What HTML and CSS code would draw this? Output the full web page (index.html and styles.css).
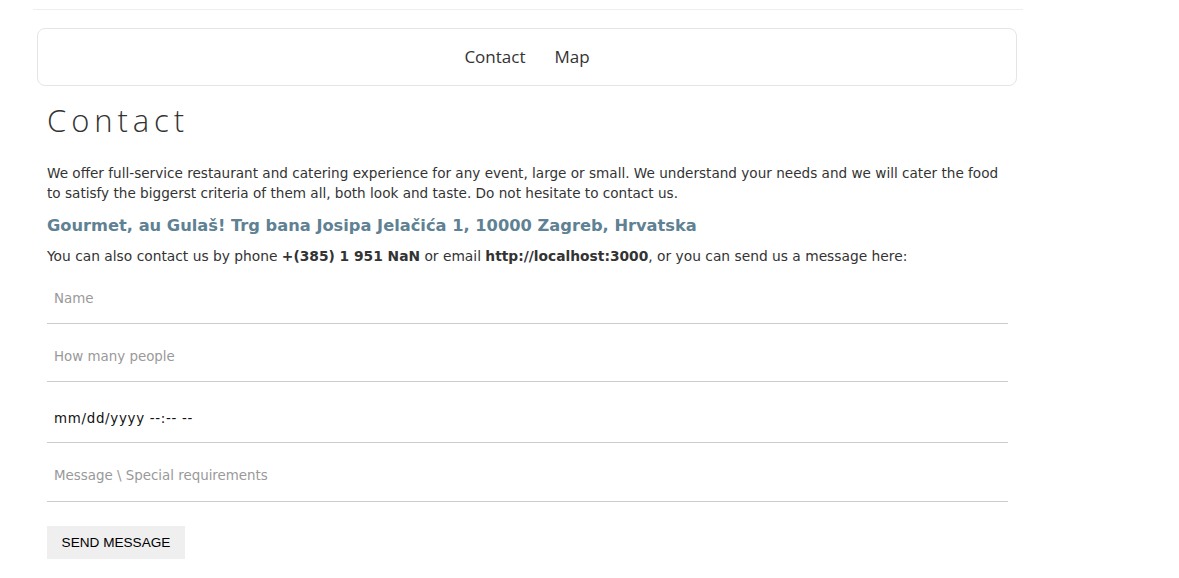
FILE: index.html
```html
<!DOCTYPE html>
<html>
<head>
  <title>Contact</title>
  <link rel="stylesheet" href="styles.css">
</head>
<body>
  <div class="page">
    <div class="top-rule"></div>
    <nav class="navbar">
      <a href="#contact">Contact</a>
      <a href="#map">Map</a>
    </nav>
    <div class="content" id="contact">
      <h1>Contact</h1>
      <p class="intro">We offer full-service restaurant and catering experience for any event, large or small. We understand your needs and we will cater the food to satisfy the biggerst criteria of them all, both look and taste. Do not hesitate to contact us.</p>
      <h3 class="address">Gourmet, au Gulaš! Trg bana Josipa Jelačića 1, 10000 Zagreb, Hrvatska</h3>
      <p class="reach">You can also contact us by phone <b>+(385) 1 951 NaN</b> or email <b>http://localhost:3000</b>, or you can send us a message here:</p>
      <form class="contact-form">
        <input type="text" placeholder="Name" />
        <input type="text" placeholder="How many people" />
        <input type="text" class="date" placeholder="mm/dd/yyyy --:-- --" />
        <textarea placeholder="Message \ Special requirements" rows="1"></textarea>
        <button type="button">SEND MESSAGE</button>
      </form>
    </div>
  </div>
</body>
</html>
```

FILE: styles.css
```css
* {
  box-sizing: border-box;
  margin: 0;
  padding: 0;
}
body {
  background: #fff;
  font-family: "DejaVu Sans", Verdana, sans-serif;
  color: #333;
}
.page {
  width: 990px;
  margin-left: 33px;
  padding-top: 9px;
}
.top-rule {
  border-top: 1px solid #eee;
}
.navbar {
  margin: 18px 6px 0 4px;
  height: 58px;
  border: 1px solid #e5e5e5;
  border-radius: 8px;
  display: flex;
  justify-content: center;
  align-items: center;
  gap: 29px;
  padding-bottom: 2px;
}
.navbar a {
  font-family: "Open Sans", "Noto Sans", sans-serif;
  font-size: 17px;
  color: #333;
  text-decoration: none;
}
.content {
  padding: 0 16px 0 14px;
}
h1 {
  font-family: "Open Sans", "Noto Sans", sans-serif;
  font-size: 31px;
  font-weight: 300;
  letter-spacing: 4.9px;
  color: #333;
  margin-top: 14px;
  line-height: 40px;
}
.intro {
  margin-top: 23px;
  font-size: 13.6px;
  line-height: 20px;
}
.address {
  margin-top: 12px;
  font-size: 16.25px;
  font-weight: bold;
  color: #5e8193;
  line-height: 22px;
}
.reach {
  margin-top: 9px;
  font-size: 13.8px;
  line-height: 20px;
}
.contact-form {
  display: flex;
  flex-direction: column;
  align-items: flex-start;
}
.contact-form input,
.contact-form textarea {
  width: 961px;
  height: 58px;
  border: none;
  border-bottom: 1px solid #ccc;
  padding: 8px 7px 0;
  font-family: "DejaVu Sans", Verdana, sans-serif;
  font-size: 13.4px;
  color: #111;
  outline: none;
  background: transparent;
}
.contact-form input::placeholder,
.contact-form textarea::placeholder {
  color: #999;
}
.contact-form .date {
  height: 61px;
  padding-top: 13px;
  letter-spacing: 0.7px;
}
.contact-form .date::placeholder {
  color: #111;
}
.contact-form textarea {
  height: 59px;
  padding-top: 24px;
  resize: none;
  line-height: 18px;
}
.contact-form button {
  margin-top: 24px;
  width: 138px;
  height: 33px;
  border: none;
  background: #efefef;
  font-family: "Liberation Sans", Arial, sans-serif;
  font-size: 13.6px;
  color: #000;
}
```
